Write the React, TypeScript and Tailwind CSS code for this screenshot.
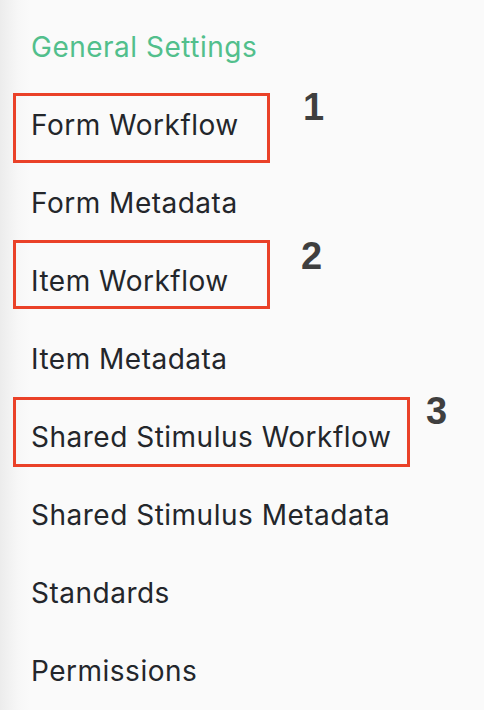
const items = [
  { label: 'Form Workflow', note: { n: '1', box: 'top-[7px] h-[70px] w-[257px]', num: 'top-[2px] left-[303px]' } },
  { label: 'Form Metadata' },
  { label: 'Item Workflow', note: { n: '2', box: 'top-[-2px] h-[69px] w-[257px]', num: 'top-[-5px] left-[301px]' } },
  { label: 'Item Metadata' },
  { label: 'Shared Stimulus Workflow', note: { n: '3', box: 'top-[-1px] h-[70px] w-[397px]', num: 'top-[-6px] left-[426px]' } },
  { label: 'Shared Stimulus Metadata' },
  { label: 'Standards' },
  { label: 'Permissions' },
]

export default function App() {
  return (
    <div className="h-[710px] w-[484px] overflow-hidden bg-[linear-gradient(to_right,#ececec_0px,#f7f7f7_18px,#fafafa_30px)] pt-2 font-['Inter',sans-serif] text-[28px] tracking-[0.5px]">
      <div className="flex h-[78px] items-center pl-[31px] text-[#52bf8c]">General Settings</div>
      {items.map((item) => (
        <div key={item.label} className="relative flex h-[78px] items-center pl-[31px] text-[#23262b]">
          {item.label}
          {item.note && (
            <>
              <div className={`absolute left-[13px] border-[3px] border-[#ea4128] ${item.note.box}`} />
              <span
                className={`absolute font-['Liberation_Sans',sans-serif] text-[38px] leading-none font-bold tracking-normal text-[#3f3f3f] ${item.note.num}`}
              >
                {item.note.n}
              </span>
            </>
          )}
        </div>
      ))}
    </div>
  )
}
